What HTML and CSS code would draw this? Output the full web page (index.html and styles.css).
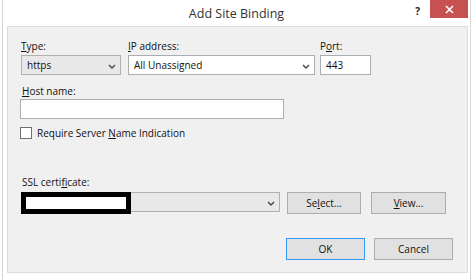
FILE: index.html
```html
<!DOCTYPE html>
<html>
<head>
<meta charset="utf-8">
<link rel="stylesheet" href="styles.css">
</head>
<body>
<div class="window">
  <div class="titlebar">
    <div></div>
    <div class="title">Add Site Binding</div>
    <div class="controls">
      <span class="help">?</span>
      <span class="close"><svg width="9" height="9" viewBox="0 0 9 9"><path d="M1 1L8 8M8 1L1 8" stroke="#fff" stroke-width="1.6"/></svg></span>
    </div>
  </div>
  <div class="panel">
    <div class="row1">
      <div class="field f-type">
        <label><u>T</u>ype:</label>
        <div class="combo grey"><span>https</span><svg class="chev" width="8" height="5" viewBox="0 0 8 5"><path d="M1 1L4 4L7 1" fill="none" stroke="#444" stroke-width="1.4"/></svg></div>
      </div>
      <div class="field f-ip">
        <label><u>I</u>P address:</label>
        <div class="combo white"><span>All Unassigned</span><svg class="chev" width="8" height="5" viewBox="0 0 8 5"><path d="M1 1L4 4L7 1" fill="none" stroke="#444" stroke-width="1.4"/></svg></div>
      </div>
      <div class="field f-port">
        <label>P<u>o</u>rt:</label>
        <div class="input"><span>443</span></div>
      </div>
    </div>
    <div class="field f-host">
      <label><u>H</u>ost name:</label>
      <div class="input host"></div>
    </div>
    <div class="check">
      <span class="box"></span>
      <span>Require Server <u>N</u>ame Indication</span>
    </div>
    <div class="field f-ssl">
      <label>SSL certi<u>f</u>icate:</label>
      <div class="ssl-row">
        <div class="combo grey ssl">
          <span class="redact"></span>
          <svg class="chev" width="8" height="5" viewBox="0 0 8 5"><path d="M1 1L4 4L7 1" fill="none" stroke="#444" stroke-width="1.4"/></svg>
        </div>
        <button class="btn sel">Se<u>l</u>ect...</button>
        <button class="btn view"><u>V</u>iew...</button>
      </div>
    </div>
    <div class="actions">
      <button class="btn ok">OK</button>
      <button class="btn cancel">Cancel</button>
    </div>
  </div>
</div>
</body>
</html>
```
FILE: styles.css
```css
* { box-sizing: border-box; }
html, body { margin: 0; padding: 0; background: #ffffff; }
body {
  font-family: "Open Sans", "Noto Sans", sans-serif;
  font-size: 10px;
  color: #111;
  width: 474px;
  height: 280px;
  overflow: hidden;
}
u { text-decoration: underline; text-underline-offset: 1px; }
.window {
  margin-left: 2px;
  width: 469px;
  height: 280px;
  border-left: 1px solid #d6d6d6;
  border-right: 1px solid #d6d6d6;
  background: #fff;
}
.titlebar {
  height: 26px;
  display: grid;
  grid-template-columns: 1fr auto 1fr;
  align-items: start;
}
.title {
  font-size: 12.5px;
  color: #333;
  padding-top: 6px;
  line-height: 16px;
}
.controls {
  display: flex;
  justify-content: flex-end;
  align-items: flex-start;
}
.help {
  font-weight: bold;
  font-size: 10px;
  color: #222;
  margin-top: 4px;
  margin-right: 10px;
}
.close {
  width: 38px;
  height: 18px;
  background: #c75050;
  display: flex;
  align-items: center;
  justify-content: center;
  margin-right: 2px;
}
.panel {
  margin-left: 4px;
  width: 461px;
  height: 247px;
  background: #f0f0f0;
  border: 1px solid #dcdcdc;
  padding: 12px 0 0 12px;
  display: flex;
  flex-direction: column;
}
label { display: block; line-height: 14px; height: 14px; }
.row1 { display: flex; }
.f-type { margin-left: 1px; width: 100px; }
.f-ip { margin-left: 7px; width: 187px; }
.f-port { margin-left: 5px; width: 51px; }
.row1 label { margin-bottom: 2px; }
.combo, .input {
  height: 20px;
  border: 1px solid #b4b4b4;
  display: flex;
  align-items: center;
  padding-left: 5px;
  position: relative;
}
.combo.grey { background: #e8e8e8; border-color: #b0b0b0; }
.combo.white, .input { background: #fff; border-color: #abadb3; }
.chev { position: absolute; right: 4px; top: 8px; }
.f-host { margin-top: 9px; }
.f-host label { margin-left: 2px; margin-bottom: 1px; }
.input.host { width: 264px; }
.check {
  margin-top: 7px;
  display: flex;
  align-items: center;
  height: 14px;
  gap: 5px;
}
.check .box {
  width: 12px;
  height: 12px;
  border: 1px solid #707070;
  background: #fff;
}
.f-ssl { margin-top: 35px; }
.f-ssl label { margin-left: 2px; margin-bottom: 3px; }
.ssl-row { display: flex; align-items: flex-start; margin-left: 1px; }
.combo.ssl { width: 259px; padding: 0; }
.redact {
  position: absolute;
  left: -1px;
  top: -1px;
  width: 110px;
  height: 22px;
  border: 5px solid #000;
  background: #fff;
}
.btn {
  font-family: inherit;
  font-size: 10px;
  color: #111;
  height: 22px;
  background: #e1e1e1;
  border: 1px solid #adadad;
  padding: 0;
  margin: 0;
}
.btn.sel { width: 74px; margin-left: 7px; }
.btn.view { width: 75px; margin-left: 10px; }
.actions {
  margin-top: 24px;
  display: flex;
  margin-left: 266px;
}
.btn.ok { width: 79px; background: #e1e1e1; border-color: #3399ff; }
.btn.cancel { width: 79px; margin-left: 9px; }
```
